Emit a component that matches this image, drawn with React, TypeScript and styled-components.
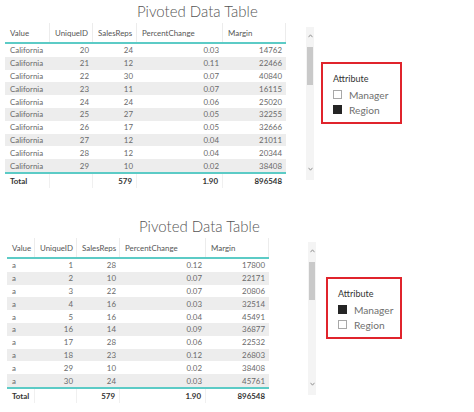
import React from "react";
import styled, { createGlobalStyle } from "styled-components";

const Global = createGlobalStyle`
  html, body { margin: 0; padding: 0; background: #ffffff; }
  body { width: 474px; height: 412px; overflow: hidden; font-family: "Lato", "Open Sans", sans-serif; }
`;

const Page = styled.div`
  display: flex;
  flex-direction: column;
  gap: 0;
`;

const Panel = styled.div<{ $h: number }>`
  display: flex;
  align-items: flex-start;
  height: ${(p) => p.$h}px;
`;

const TableArea = styled.div<{ $left: number; $width: number }>`
  margin-left: ${(p) => p.$left}px;
  width: ${(p) => p.$width}px;
  display: flex;
  flex-direction: column;
`;

const Title = styled.div<{ $indent: number }>`
  height: 23px;
  line-height: 22px;
  padding-left: ${(p) => p.$indent}px;
  font-family: "Lato", "Open Sans", sans-serif;
  font-weight: 300;
  font-size: 15px;
  color: #555;
  white-space: nowrap;
`;

const Row = styled.div<{ $cols: string; $h: number; $shade?: boolean }>`
  display: grid;
  grid-template-columns: ${(p) => p.$cols};
  height: ${(p) => p.$h}px;
  align-items: center;
  background: ${(p) => (p.$shade ? "#ededed" : "transparent")};
`;

const HeaderRow = styled(Row)`
  border-bottom: 2px solid #5ccbc6;
  align-items: stretch;
`;

const TotalRow = styled(Row)`
  border-top: 2px solid #5ccbc6;
  align-items: stretch;
`;

const HeadCell = styled.div`
  display: flex;
  align-items: center;
  padding: 0 4px 0 5px;
  font-size: 7.9px;
  color: #555;
  border-right: 1px solid #ececec;
  white-space: nowrap;
  overflow: hidden;
`;

const Cell = styled.div<{ $right?: boolean }>`
  padding: 0 4px 0 5px;
  font-size: 7.9px;
  color: #6a6a6a;
  text-align: ${(p) => (p.$right ? "right" : "left")};
  white-space: nowrap;
`;

const TotalCell = styled.div<{ $right?: boolean; $last?: boolean }>`
  display: flex;
  align-items: center;
  justify-content: ${(p) => (p.$right ? "flex-end" : "flex-start")};
  padding: 0 4px 0 5px;
  font-size: 7.9px;
  font-weight: 700;
  color: #333;
  border-right: ${(p) => (p.$last ? "none" : "1px solid #f0f0f0")};
  white-space: nowrap;
`;

const ScrollTrack = styled.div<{ $gap: number; $w: number }>`
  margin-left: ${(p) => p.$gap}px;
  margin-top: 27px;
  width: ${(p) => p.$w}px;
  height: 153px;
  background: #f4f4f4;
  display: flex;
  flex-direction: column;
  align-items: center;
`;

const Arrow = styled.div<{ $m: string }>`
  margin: ${(p) => p.$m};
  height: 5px;
  display: flex;
  align-items: center;
  justify-content: center;
`;

const Thumb = styled.div`
  align-self: stretch;
  margin: 0 1px;
  height: 38px;
  background: #c9c9c9;
`;

const Spacer = styled.div`
  flex: 1;
`;

const LegendBox = styled.div<{ $gap: number; $w: number }>`
  margin-left: ${(p) => p.$gap}px;
  margin-top: 62px;
  width: ${(p) => p.$w}px;
  height: 62px;
  box-sizing: border-box;
  border: 2px solid #e0242c;
  padding: 9px 0 0 10px;
  display: flex;
  flex-direction: column;
`;

const LegendTitle = styled.div`
  font-size: 9px;
  color: #333;
  height: 12px;
  line-height: 12px;
  margin-bottom: 2px;
`;

const LegendItem = styled.div`
  display: flex;
  align-items: center;
  height: 15px;
  gap: 7px;
  font-size: 10.2px;
  color: #707070;
`;

const Box = styled.span<{ $on: boolean }>`
  width: 9px;
  height: 9px;
  box-sizing: border-box;
  border: 1px solid ${(p) => (p.$on ? "#252525" : "#a8a8a8")};
  background: ${(p) => (p.$on ? "#252525" : "#fff")};
  display: inline-block;
`;

const Chevron = ({ up }: { up?: boolean }) => (
  <svg width="5" height="4" viewBox="0 0 5 4">
    <path
      d={up ? "M0.5 3.2 L2.5 0.8 L4.5 3.2" : "M0.5 0.8 L2.5 3.2 L4.5 0.8"}
      fill="none"
      stroke="#8a8a8a"
      strokeWidth="0.9"
    />
  </svg>
);

type Rec = [string, number, number, string, number];

const data1: Rec[] = [
  ["California", 20, 24, "0.03", 14762],
  ["California", 21, 12, "0.11", 22466],
  ["California", 22, 30, "0.07", 40840],
  ["California", 23, 11, "0.07", 16115],
  ["California", 24, 24, "0.06", 25020],
  ["California", 25, 27, "0.05", 32255],
  ["California", 26, 17, "0.05", 32666],
  ["California", 27, 12, "0.04", 21011],
  ["California", 28, 12, "0.04", 20344],
  ["California", 29, 10, "0.02", 38408],
];

const data2: Rec[] = [
  ["a", 1, 28, "0.12", 17800],
  ["a", 2, 10, "0.07", 22171],
  ["a", 3, 22, "0.07", 20806],
  ["a", 4, 16, "0.03", 32514],
  ["a", 5, 16, "0.04", 45491],
  ["a", 16, 14, "0.09", 36877],
  ["a", 17, 28, "0.06", 22532],
  ["a", 18, 23, "0.12", 26803],
  ["a", 29, 10, "0.02", 38408],
  ["a", 30, 24, "0.03", 45761],
];

const headers = ["Value", "UniqueID", "SalesReps", "PercentChange", "Margin"];

interface VisualProps {
  rows: Rec[];
  cols: number[];
  left: number;
  titleIndent: number;
  scrollGap: number;
  scrollW: number;
  legendGap: number;
  legendW: number;
  manager: boolean;
  height: number;
}

const Visual = (p: VisualProps) => {
  const tpl = p.cols.map((c) => `${c}px`).join(" ");
  const width = p.cols.reduce((a, b) => a + b, 0);
  return (
    <Panel $h={p.height}>
      <TableArea $left={p.left} $width={width}>
        <Title $indent={p.titleIndent}>Pivoted Data Table</Title>
        <HeaderRow $cols={tpl} $h={19}>
          {headers.map((h) => (
            <HeadCell key={h}>{h}</HeadCell>
          ))}
        </HeaderRow>
        {p.rows.map((r, i) => (
          <Row key={i} $cols={tpl} $h={12.8} $shade={i % 2 === 1}>
            <Cell>{r[0]}</Cell>
            <Cell $right>{r[1]}</Cell>
            <Cell $right>{r[2]}</Cell>
            <Cell $right>{r[3]}</Cell>
            <Cell $right>{r[4]}</Cell>
          </Row>
        ))}
        <TotalRow $cols={tpl} $h={14}>
          <TotalCell>Total</TotalCell>
          <TotalCell $right></TotalCell>
          <TotalCell $right>579</TotalCell>
          <TotalCell $right>1.90</TotalCell>
          <TotalCell $right $last>
            896548
          </TotalCell>
        </TotalRow>
      </TableArea>
      <ScrollTrack $gap={p.scrollGap} $w={p.scrollW}>
        <Arrow $m="6px 0 9px">
          <Chevron up />
        </Arrow>
        <Thumb />
        <Spacer />
        <Arrow $m="0 0 9px">
          <Chevron />
        </Arrow>
      </ScrollTrack>
      <LegendBox $gap={p.legendGap} $w={p.legendW}>
        <LegendTitle>Attribute</LegendTitle>
        <LegendItem>
          <Box $on={p.manager} />
          Manager
        </LegendItem>
        <LegendItem>
          <Box $on={!p.manager} />
          Region
        </LegendItem>
      </LegendBox>
    </Panel>
  );
};

export default function App() {
  return (
    <Page>
      <Global />
      <Visual
        rows={data1}
        cols={[45, 43, 44, 86, 63]}
        left={5}
        titleIndent={132}
        scrollGap={20}
        scrollW={8}
        legendGap={7}
        legendW={81}
        manager={false}
        height={215}
      />
      <Visual
        rows={data2}
        cols={[28, 42, 43, 86, 63]}
        left={7}
        titleIndent={132}
        scrollGap={39}
        scrollW={8}
        legendGap={10}
        legendW={76}
        manager={true}
        height={197}
      />
    </Page>
  );
}
